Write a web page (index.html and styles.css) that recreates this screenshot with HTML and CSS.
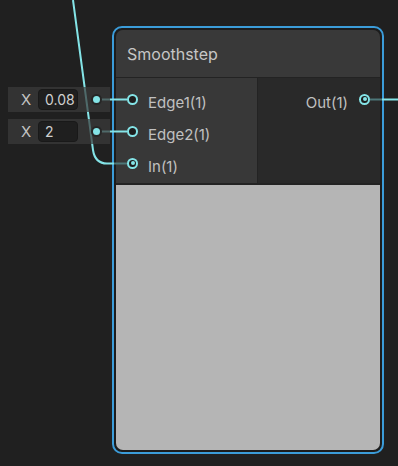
FILE: index.html
```html
<!DOCTYPE html>
<html>

<head>
    <meta name="viewport" content="width=device-width, initial-scale=1.0">
    <title>Smoothstep node</title>
    <link rel="stylesheet" href="styles.css">
</head>

<body>
    <div class="graph">

        <div class="node">
            <div class="node-inner">
                <div class="node-title">Smoothstep</div>
                <div class="ports">
                    <div class="inputs">
                        <div class="port-row">
                            <span class="port"></span>
                            <span class="port-label">Edge1(1)</span>
                        </div>
                        <div class="port-row">
                            <span class="port"></span>
                            <span class="port-label">Edge2(1)</span>
                        </div>
                        <div class="port-row">
                            <span class="port connected"></span>
                            <span class="port-label">In(1)</span>
                        </div>
                    </div>
                    <div class="outputs">
                        <div class="port-row out">
                            <span class="port-label">Out(1)</span>
                            <span class="port connected"></span>
                        </div>
                    </div>
                </div>
                <div class="preview"></div>
            </div>
        </div>

        <!-- edges -->
        <svg class="wires" width="398" height="466" viewBox="0 0 398 466">
            <path d="M73 0 L93 150 Q95 163.5 107 163.5 L114 163.5" fill="none" stroke="#84e4e7" stroke-width="2" />
            <path d="M114 163.5 L127 163.5" fill="none" stroke="#4d7779" stroke-width="2" />
            <path d="M100 99.5 L127 99.5" fill="none" stroke="#84e4e7" stroke-width="2" />
            <path d="M100 131.5 L127 131.5" fill="none" stroke="#84e4e7" stroke-width="2" />
            <path d="M370 99.5 L382 99.5" fill="none" stroke="#4d7779" stroke-width="2" />
            <path d="M382 99.5 L398 99.5" fill="none" stroke="#84e4e7" stroke-width="2" />
        </svg>

        <div class="inline-fields">
            <div class="field-row">
                <span class="field-label">X</span>
                <span class="field-box">0.08</span>
                <span class="field-dot"></span>
            </div>
            <div class="field-row">
                <span class="field-label">X</span>
                <span class="field-box">2</span>
                <span class="field-dot"></span>
            </div>
        </div>
    </div>
</body>

</html>
```

FILE: styles.css
```css
* {
    box-sizing: border-box;
    font-family: Inter, "Noto Sans", sans-serif;
}

body {
    margin: 0;
    background-color: #202020;
    overflow: hidden;
}

.graph {
    position: relative;
    width: 398px;
    height: 466px;
}

.node {
    position: absolute;
    left: 112px;
    top: 26px;
    width: 272px;
    height: 428px;
    padding: 2px;
    border: 2px solid #3b9cd9;
    border-radius: 10px;
    background-color: #1c1c1c;
}

.node-inner {
    display: flex;
    flex-direction: column;
    height: 100%;
    border-radius: 7px;
    overflow: hidden;
    background-color: #2a2a2a;
}

.node-title {
    display: flex;
    align-items: center;
    height: 48px;
    padding-left: 11px;
    padding-top: 1px;
    background-color: #393939;
    border-bottom: 1px solid #232323;
    color: #c6c6c6;
    font-size: 16px;
}

.ports {
    display: flex;
    height: 107px;
    border-bottom: 2px solid #232323;
}

.inputs {
    width: 142px;
    padding: 5px 0;
    background-color: #383838;
    border-right: 1px solid #232323;
}

.outputs {
    flex: 1;
    padding: 5px 0;
    background-color: #292929;
}

.port-row {
    display: flex;
    align-items: center;
    height: 32px;
    padding-left: 11px;
}

.port-row.out {
    justify-content: flex-end;
    padding-left: 0;
    padding-right: 10px;
}

.port {
    position: relative;
    width: 11px;
    height: 11px;
    border: 2px solid #84e4e7;
    border-radius: 50%;
    background-color: #1d1d1d;
    flex-shrink: 0;
}

.port.connected::after {
    content: "";
    position: absolute;
    left: 1.5px;
    top: 1.5px;
    width: 4px;
    height: 4px;
    border-radius: 50%;
    background-color: #84e4e7;
}

.port-label {
    margin-top: 6px;
    margin-left: 10px;
    color: #c0c0c0;
    font-size: 15px;
}

.out .port-label {
    margin-left: 0;
    margin-right: 11px;
}

.preview {
    flex: 1;
    background-color: #b5b5b5;
}

.wires {
    position: absolute;
    left: 0;
    top: 0;
}

.inline-fields {
    position: absolute;
    left: 8px;
    top: 87px;
    display: flex;
    flex-direction: column;
    gap: 7px;
}

.field-row {
    display: flex;
    align-items: center;
    width: 102px;
    height: 25px;
    padding-left: 13px;
    background-color: rgba(58, 58, 58, 0.72);
}

.field-label {
    width: 17px;
    color: #c2c2c2;
    font-size: 15px;
}

.field-box {
    display: flex;
    align-items: center;
    width: 40px;
    height: 21px;
    padding-left: 6px;
    border: 1px solid #191919;
    border-radius: 4px;
    background-color: #1f1f1f;
    color: #d0d0d0;
    font-size: 14px;
}

.field-dot {
    position: relative;
    width: 11px;
    height: 11px;
    margin-left: auto;
    margin-right: 8px;
    border-radius: 50%;
    background-color: #262626;
}

.field-dot::after {
    content: "";
    position: absolute;
    left: 2px;
    top: 2px;
    width: 7px;
    height: 7px;
    border-radius: 50%;
    background-color: #84e4e7;
}
```
